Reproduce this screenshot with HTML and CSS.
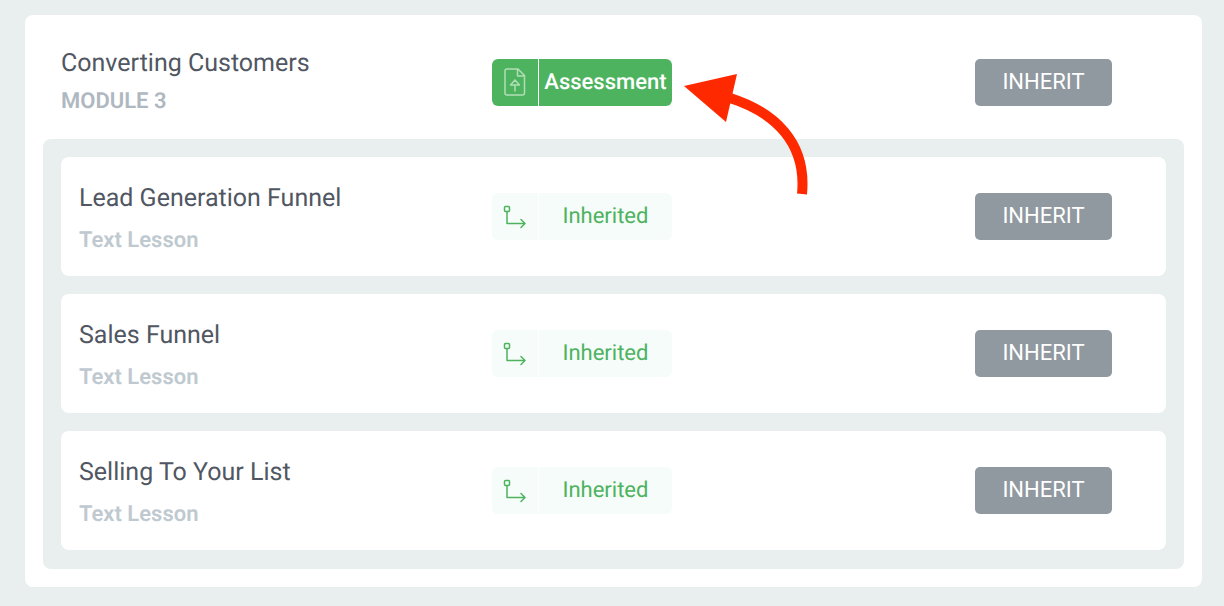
FILE: index.html
```html
<!DOCTYPE html>
<html lang="en">
<head>
<meta charset="utf-8">
<meta name="viewport" content="width=device-width, initial-scale=1">
<title>Module 3</title>
<link rel="stylesheet" href="styles.css">
</head>
<body>
<svg class="defs" aria-hidden="true">
  <symbol id="icon-inherit" viewBox="0 0 24 24">
    <rect x="1.500" y="1.500" width="5" height="5" rx="1"/>
    <path d="M4 6.500V18.500H22M18 14.500L22 18.500L18 22.500"/>
  </symbol>
</svg>
<main class="module">
  <header class="row module-header">
    <div class="info">
      <h1 class="title">Converting Customers</h1>
      <p class="subtitle module-number">MODULE 3</p>
    </div>
    <div class="badge assessment">
      <span class="badge-icon">
        <svg class="icon-file" viewBox="0 0 22 28" aria-hidden="true">
          <path d="M3 1H14L20.500 7.500V25Q20.500 27 18.500 27H3Q1 27 1 25V3Q1 1 3 1ZM13.500 1V8H20.500"/>
          <path d="M11 23V17M6.500 17L11 12L15.500 17Z"/>
        </svg>
      </span>
      <span class="badge-label">Assessment</span>
      <svg class="arrow" viewBox="0 0 130 125" aria-hidden="true">
        <path class="arrow-line" d="M50 26C94 40 127 70 122 122"/>
        <path class="arrow-head" d="M4 14L57 2L46 50Z"/>
      </svg>
    </div>
    <button class="inherit" type="button">INHERIT</button>
  </header>
  <section class="lessons">
    <article class="row lesson">
      <div class="info">
        <h2 class="title">Lead Generation Funnel</h2>
        <p class="subtitle">Text Lesson</p>
      </div>
      <div class="badge inherited">
        <span class="badge-icon"><svg class="icon-inherit" aria-hidden="true"><use href="#icon-inherit"/></svg></span>
        <span class="badge-label">Inherited</span>
      </div>
      <button class="inherit" type="button">INHERIT</button>
    </article>
    <article class="row lesson">
      <div class="info">
        <h2 class="title">Sales Funnel</h2>
        <p class="subtitle">Text Lesson</p>
      </div>
      <div class="badge inherited">
        <span class="badge-icon"><svg class="icon-inherit" aria-hidden="true"><use href="#icon-inherit"/></svg></span>
        <span class="badge-label">Inherited</span>
      </div>
      <button class="inherit" type="button">INHERIT</button>
    </article>
    <article class="row lesson">
      <div class="info">
        <h2 class="title">Selling To Your List</h2>
        <p class="subtitle">Text Lesson</p>
      </div>
      <div class="badge inherited">
        <span class="badge-icon"><svg class="icon-inherit" aria-hidden="true"><use href="#icon-inherit"/></svg></span>
        <span class="badge-label">Inherited</span>
      </div>
      <button class="inherit" type="button">INHERIT</button>
    </article>
  </section>
</main>
</body>
</html>
```
FILE: styles.css
```css
* { box-sizing: border-box; }
body {
  margin: 0;
  padding: 15px 22px 19px 25px;
  background: #e9efee;
  font-family: Roboto, sans-serif;
  color: #515762;
  text-rendering: geometricPrecision;
}
.defs { position: absolute; width: 0; height: 0; }
.module { padding: 0 18px 18px; background: #fff; border-radius: 8px; }
.row {
  display: grid;
  grid-template-columns: 41% 1fr auto;
  align-items: center;
  padding-right: 54px;
}
.module-header { margin: 0 18px; padding-top: 30px; padding-bottom: 20px; }
.module-header .info { padding-bottom: 3px; }
.lessons {
  display: grid;
  gap: 18px;
  padding: 18px 18px 19px;
  background: #e9efee;
  border-radius: 8px;
}
.lesson { padding-top: 21px; padding-bottom: 21px; background: #fff; border-radius: 8px; }
.lesson .info { padding: 2px 0 0 18px; }
.title { margin: 0; font-size: 25px; font-weight: 400; line-height: 38px; }
.subtitle { margin: 0; padding-top: 8px; font-size: 22px; font-weight: 600; line-height: 29px; color: #bfc9d0; }
.module-number { padding-top: 4px; color: #afb8c1; }
.badge {
  position: relative;
  display: flex;
  gap: 1px;
  width: 180px;
  height: 47px;
  font-size: 22px;
  line-height: 48px;
}
.badge-icon { display: grid; place-items: center; width: 46px; border-radius: 6px 0 0 6px; }
.badge-label { flex: 1; text-align: center; border-radius: 0 6px 6px 0; }
.assessment { color: #fff; font-weight: 500; }
.assessment > span { background: #4db35e; }
.inherited { color: #4db35e; }
.inherited > span { background: #f6fcf9; }
.icon-file, .icon-inherit { fill: none; stroke-linejoin: round; stroke-linecap: round; }
.icon-file { width: 22px; height: 28px; stroke: #b0dfb7; stroke-width: 1.5; }
.icon-inherit { width: 24px; height: 24px; stroke: #4db35e; stroke-width: 1.5; }
.inherit {
  width: 137px;
  height: 47px;
  padding: 0 0 1px;
  border: 0;
  border-radius: 5px;
  background: #9098a0;
  color: #fff;
  font: 400 22px/46px Roboto, sans-serif;
}
.arrow { position: absolute; left: 188px; top: 13px; z-index: 1; width: 130px; height: 125px; }
.arrow-line { fill: none; stroke: #ff2900; stroke-width: 10; }
.arrow-head { fill: #ff2900; }
```
